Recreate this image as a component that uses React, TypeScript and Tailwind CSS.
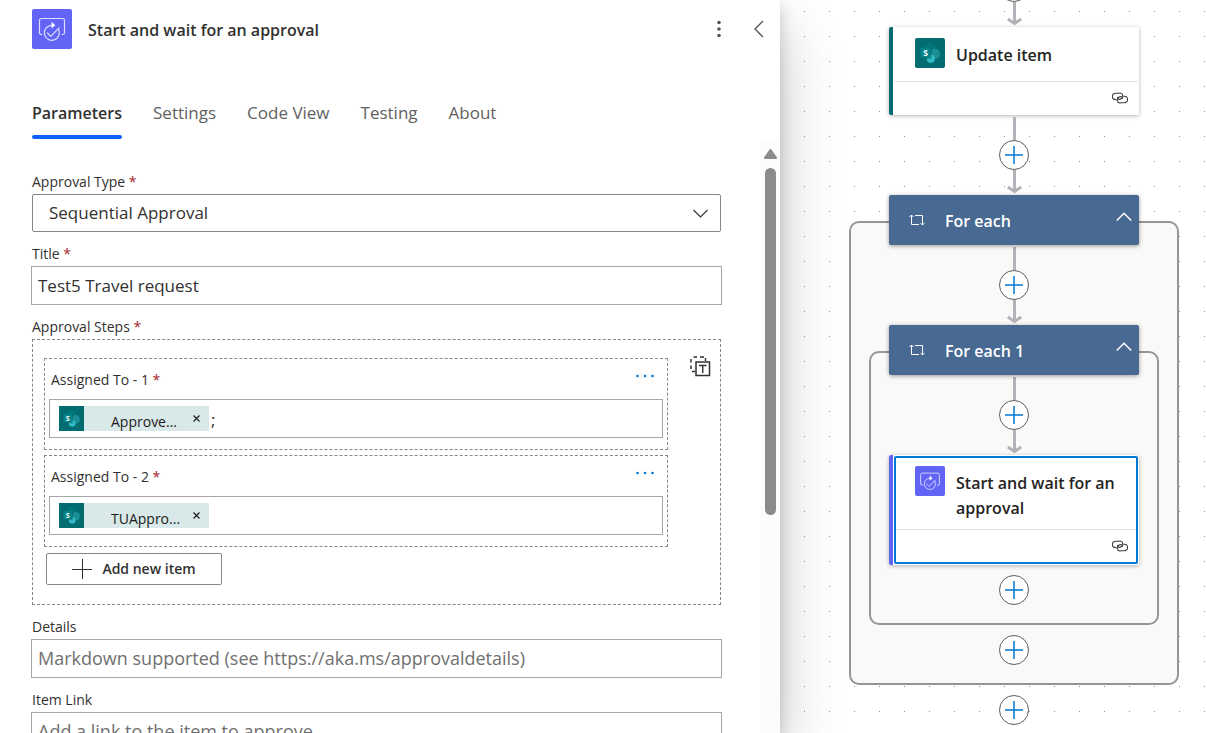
import { ReactNode } from "react";

const tabs = ["Parameters", "Settings", "Code View", "Testing", "About"];

const steps = [
  { id: 1, token: "Approve...", rest: ";" },
  { id: 2, token: "TUAppro...", rest: "" },
];

const SharePointIcon = ({ className = "" }) => (
  <svg viewBox="0 0 30 30" className={className} aria-hidden="true">
    <rect width="30" height="30" fill="#036c70" />
    <circle cx="15" cy="10.5" r="5.6" fill="#03787c" />
    <circle cx="20" cy="15.8" r="5.1" fill="#1a8f95" />
    <circle cx="15.8" cy="20.8" r="4.1" fill="#30bcc6" />
    <path d="M9 9.5h7.6v11.2H11.7a4 4 0 0 1-2.7-2z" fill="#024d50" opacity=".45" />
    <rect x="5.5" y="9.5" width="10" height="10" rx=".8" fill="#038387" />
    <text
      x="10.5"
      y="17.6"
      fontSize="8.5"
      fontWeight="700"
      fill="#fff"
      textAnchor="middle"
      fontFamily="Open Sans, sans-serif"
    >
      S
    </text>
  </svg>
);

const ApprovalIcon = ({ className = "" }) => (
  <svg viewBox="0 0 40 40" className={className} fill="none" aria-hidden="true">
    <rect width="40" height="40" fill="#6264f5" />
    <g stroke="#dcdcff" strokeWidth="1.2" strokeLinecap="round" strokeLinejoin="round">
      <path d="M10 25.5H9.2A1.7 1.7 0 0 1 7.5 23.8V11.5a2 2 0 0 1 2-2h21a2 2 0 0 1 2 2v12.3a1.7 1.7 0 0 1-1.7 1.7H30" />
      <path d="M21.5 16.3h-1.7a7.5 7.5 0 1 0 6.7 4" />
      <path d="M15.5 24l3.3 3.3 8.2-8.5" />
    </g>
    <path d="M19.6 12.8l3.7 3.5-3.7 3.2z" fill="#fff" />
  </svg>
);

const LinkIcon = () => (
  <svg
    width="16"
    height="12"
    viewBox="0 0 16 12"
    fill="none"
    stroke="#3b3a39"
    strokeWidth="1.1"
    strokeLinecap="round"
    aria-hidden="true"
  >
    <path d="M4.300 7.700H3.600A3 3 0 0 1 3.600 1.200H7a3 3 0 0 1 1.500 5.900c-1.200.7-2.800.1-2.800-1.200" />
    <path d="M11.700 4.300h.7a3 3 0 0 1 0 6.500H9a3 3 0 0 1-1.500-5.900c1.200-.7 2.800-.1 2.800 1.200" />
  </svg>
);

const LoopIcon = () => (
  <svg
    width="16"
    height="12"
    viewBox="0 0 16 12"
    fill="none"
    stroke="#fff"
    strokeWidth="1"
    aria-hidden="true"
  >
    <path d="M.5 3L2.5 1l2 2M2.5 1v9.5H10M15.5 9L13.5 11l-2-2M13.5 11V1.5H6" />
  </svg>
);

const CopyTextIcon = () => (
  <svg width="21" height="21" viewBox="0 0 21 21" fill="none" aria-hidden="true">
    <path
      d="M3.5 1H7M10 1h4M1 3v3.5M1 9.5V13M2 15.5h3M15.5 2v3"
      stroke="#323130"
      strokeWidth="1.5"
    />
    <rect x="6" y="6" width="13.5" height="13.5" stroke="#323130" strokeWidth="1.5" />
    <path d="M9 9.5h7.5M12.75 9.5V17" stroke="#323130" strokeWidth="1.4" />
  </svg>
);

const AddButton = () => (
  <button
    type="button"
    aria-label="Insert a new step"
    className="flex size-[30px] shrink-0 items-center justify-center rounded-full border border-[#605e5c] bg-white"
  >
    <svg width="18" height="18" viewBox="0 0 18 18" stroke="#0078d4" strokeWidth="1.5">
      <path d="M0 9h18M9 0v18" />
    </svg>
  </button>
);

const Connector = () => (
  <div className="flex h-20 shrink-0 flex-col items-center">
    <div className="mt-0.5 w-[3px] flex-1 bg-[#b3b2b8]" />
    <AddButton />
    <svg
      width="15"
      height="25"
      viewBox="0 0 15 25"
      fill="none"
      stroke="#b3b2b8"
      strokeWidth="3"
      aria-hidden="true"
    >
      <path d="M7.5 0v21M.8 17l6.7 4.5L14.2 17" />
    </svg>
  </div>
);

interface ActionCardProps {
  title: string;
  icon: ReactNode;
  accent: string;
  selected?: boolean;
}
const ActionCard = ({ title, icon, accent, selected = false }: ActionCardProps) => (
  <div className="flex w-[250px] shrink-0 rounded-xs bg-white shadow-[0_1px_4px_rgba(0,0,0,0.3)]">
    <div className={`w-1 shrink-0 rounded-l-xs ${accent}`} />
    <div
      className={`flex-1 ${selected ? "m-px rounded-xs border-2 border-[#0078d4]" : "border border-transparent"}`}
    >
      <div
        className={`flex gap-[11px] border-b border-[#e1dfdd] ${selected ? "pt-2 pb-2 pl-[19px]" : "pt-2.5 pb-[13px] pl-[21px]"}`}
      >
        {icon}
        <h3 className="pt-[5px] text-base leading-[25px] font-semibold text-[#252423]">{title}</h3>
      </div>
      <div className={`flex h-8 items-center justify-end ${selected ? "pr-2" : "pr-2.5"}`}>
        <LinkIcon />
      </div>
    </div>
  </div>
);

interface ScopeProps {
  title: string;
  width: string;
  children: ReactNode;
}
const Scope = ({ title, width, children }: ScopeProps) => (
  <section className="flex shrink-0 flex-col items-center">
    <button
      type="button"
      className="z-10 flex h-[50px] w-[250px] items-center rounded-xs bg-[#486991] pr-[7px] pl-5 text-white shadow-[0_1px_4px_rgba(0,0,0,0.4)]"
    >
      <LoopIcon />
      <span className="flex-1 pt-0.5 pl-5 text-left text-base leading-6 font-semibold">
        {title}
      </span>
      <svg
        width="16"
        height="10"
        viewBox="0 0 16 10"
        fill="none"
        stroke="currentColor"
        strokeWidth="1.5"
        className="mb-1.5"
        aria-hidden="true"
      >
        <path d="M.8 8.5L8 1.3l7.2 7.2" />
      </svg>
    </button>
    <div
      className={`-mt-6 flex flex-col items-center rounded-[10px] border-2 border-[#979593] bg-[#faf9f8] pt-[22px] pb-[18px] ${width}`}
    >
      {children}
    </div>
  </section>
);

const Label = ({ htmlFor = "", text = "", required = false }) => (
  <label htmlFor={htmlFor} className="text-sm leading-5 text-[#323130]">
    {text}
    {required && <span className="text-[#a4262c]"> *</span>}
  </label>
);

const TextField = ({ id = "", label = "", required = false, value = "", placeholder = "" }) => (
  <div className="flex flex-col gap-0.5">
    <Label htmlFor={id} text={label} required={required} />
    <input
      id={id}
      type="text"
      defaultValue={value}
      placeholder={placeholder}
      className="-mx-px h-[39px] border border-[#a6a6a6] bg-white px-1.5 text-[17px] text-[#323130] placeholder:text-lg placeholder:text-[#707070]"
    />
  </div>
);

function ApprovalStep({ id = 0, token = "", rest = "" }) {
  const inputId = "assigned-" + id;
  return (
    <div className="border border-dashed border-[#8a8886] px-1 pt-[11px] pb-[11px]">
      <div className="flex items-start justify-between pr-2 pl-0.5">
        <Label htmlFor={inputId} text={"Assigned To - " + id} required />
        <button type="button" aria-label="More options" className="flex h-3 items-center">
          <svg width="20" height="4" viewBox="0 0 20 4" fill="#0078d4">
            <circle cx="2.5" cy="2" r="1.3" />
            <circle cx="10" cy="2" r="1.3" />
            <circle cx="17.5" cy="2" r="1.3" />
          </svg>
        </button>
      </div>
      <div className="mt-[9px] flex h-[39px] items-center border border-[#a6a6a6] pr-2 pl-[9px]">
        <span className="flex h-[25px] w-[150px] shrink-0 items-center bg-[#d9e8e8]">
          <SharePointIcon className="size-[25px]" />
          <span className="flex-1 pt-1.5 pl-[27px] text-sm leading-5 text-[#1b1a19]">{token}</span>
          <button
            type="button"
            aria-label="Remove"
            className="flex w-[26px] justify-center text-[#201f1e]"
          >
            <svg width="7" height="7" viewBox="0 0 7 7" stroke="currentColor" strokeWidth="1.2">
              <path d="M.5.5l6 6M6.5.5l-6 6" />
            </svg>
          </button>
        </span>
        <input
          id={inputId}
          type="text"
          defaultValue={rest}
          className="min-w-0 flex-1 pt-0.5 pl-0.5 text-[17px] text-[#323130] outline-none"
        />
      </div>
    </div>
  );
}

function DetailsPanel() {
  return (
    <aside className="z-20 flex min-w-0 flex-col bg-white shadow-[0_26px_58px_rgba(0,0,0,0.22),0_5px_14px_rgba(0,0,0,0.18)]">
      <header className="flex items-center pt-[9px] pr-[15px] pl-8">
        <ApprovalIcon className="size-10 rounded-xs" />
        <h1 className="flex-1 pt-0.5 pl-4 text-base leading-6 font-semibold text-[#323130]">
          Start and wait for an approval
        </h1>
        <button type="button" aria-label="More" className="mr-8">
          <svg width="4" height="18" viewBox="0 0 4 18" fill="#555">
            <circle cx="2" cy="2.5" r="1.8" />
            <circle cx="2" cy="9" r="1.8" />
            <circle cx="2" cy="15.5" r="1.8" />
          </svg>
        </button>
        <button type="button" aria-label="Collapse">
          <svg
            width="12"
            height="18"
            viewBox="0 0 12 18"
            fill="none"
            stroke="#555"
            strokeWidth="1.4"
          >
            <path d="M10 1L2 9l8 8" />
          </svg>
        </button>
      </header>

      <nav className="mt-[51px] flex gap-[31px] pl-8" role="tablist">
        {tabs.map((tab, i) => (
          <button
            key={tab}
            type="button"
            role="tab"
            aria-selected={i === 0}
            className={`flex flex-col gap-[9px] leading-[26px] ${i === 0 ? "text-base leading-[26px] font-semibold text-[#323130]" : "text-[17px] text-[#616161]"}`}
          >
            {tab}
            {i === 0 && <span className="h-1 w-full rounded-full bg-[#0f62fe]" />}
          </button>
        ))}
      </nav>

      <div className="flex min-h-0 flex-1">
        <form className="flex min-w-0 flex-1 flex-col gap-3 overflow-hidden pt-[33px] pr-10 pl-8">
          <div className="flex flex-col gap-0.5">
            <Label htmlFor="approval-type" text="Approval Type" required />
            <div className="grid items-center">
              <select
                id="approval-type"
                className="col-start-1 row-start-1 h-[38px] appearance-none rounded-xs border border-[#8a8886] bg-white px-4 text-[17px] text-[#323130]"
              >
                <option>Sequential Approval</option>
              </select>
              <svg
                width="15"
                height="9"
                viewBox="0 0 15 9"
                fill="none"
                stroke="#323130"
                strokeWidth="1.1"
                className="pointer-events-none col-start-1 row-start-1 mr-[13px] justify-self-end"
                aria-hidden="true"
              >
                <path d="M.5 1l7 7 7-7" />
              </svg>
            </div>
          </div>

          <TextField id="title" label="Title" value="Test5 Travel request" required />

          <fieldset className="flex flex-col">
            <legend className="mb-0.5 text-sm leading-5 text-[#323130]">
              Approval Steps<span className="text-[#a4262c]"> *</span>
            </legend>
            <div className="flex items-start border border-dashed border-[#8a8886] pt-[18px] pr-[9px] pb-[19px] pl-[11px]">
              <div className="flex min-w-0 flex-1 flex-col gap-[5px]">
                {steps.map((step) => (
                  <ApprovalStep key={"step" + step.id} {...step} />
                ))}
                <button
                  type="button"
                  className="mt-px ml-0.5 flex h-8 w-44 items-center justify-center gap-2.5 rounded-xs border border-[#8a8886] bg-white text-sm font-semibold text-[#323130]"
                >
                  <svg width="20" height="20" viewBox="0 0 20 20" stroke="#323130">
                    <path d="M0 10.5h20M10.5 0v20" />
                  </svg>
                  Add new item
                </button>
              </div>
              <button
                type="button"
                aria-label="Switch to input entire array"
                className="-mt-0.5 ml-[22px] flex"
              >
                <CopyTextIcon />
              </button>
            </div>
          </fieldset>

          <TextField
            id="details"
            label="Details"
            placeholder="Markdown supported (see https://aka.ms/approvaldetails)"
          />
          <TextField
            id="item-link"
            label="Item Link"
            placeholder="Add a link to the item to approve"
          />
        </form>

        <div className="flex w-[19px] shrink-0 flex-col items-center gap-[9px] bg-[#fcfcfc] pt-2.5">
          <svg width="13" height="10" viewBox="0 0 13 10" fill="#8b8b8b" className="shrink-0">
            <path d="M5.4.7a1.4 1.4 0 0 1 2.2 0L12.7 8a1.2 1.2 0 0 1-1 2H1.3a1.2 1.2 0 0 1-1-2z" />
          </svg>
          <div className="h-[347px] w-[11px] rounded-full bg-[#8b8b8b]" />
        </div>
      </div>
    </aside>
  );
}

function FlowCanvas() {
  return (
    <main className="flex min-w-0 flex-col items-center overflow-hidden bg-white bg-[radial-gradient(circle,#8f8f8f_0.8px,transparent_1px)] bg-size-[25px_25px] bg-position-[12px_-1px] pl-[41px]">
      <div className="flex h-[27px] shrink-0 flex-col justify-end overflow-hidden">
        <Connector />
      </div>
      <ActionCard
        title="Update item"
        accent="bg-[#036c70]"
        icon={<SharePointIcon className="size-[30px] shrink-0 rounded-xs" />}
      />
      <Connector />
      <Scope title="For each" width="w-[330px]">
        <Connector />
        <Scope title="For each 1" width="w-[290px]">
          <Connector />
          <ActionCard
            title="Start and wait for an approval"
            accent="bg-[#6264f5]"
            icon={<ApprovalIcon className="size-[30px] shrink-0 rounded-xs" />}
            selected
          />
          <div className="pt-2.5">
            <AddButton />
          </div>
        </Scope>
        <div className="pt-2.5">
          <AddButton />
        </div>
      </Scope>
      <div className="pt-2.5">
        <AddButton />
      </div>
    </main>
  );
}

function App() {
  return (
    <div className="grid h-screen grid-cols-[780fr_427fr] grid-rows-[100%] overflow-hidden bg-white font-['Open_Sans','Noto_Sans',sans-serif]">
      <DetailsPanel />
      <FlowCanvas />
    </div>
  );
}

export default App;
